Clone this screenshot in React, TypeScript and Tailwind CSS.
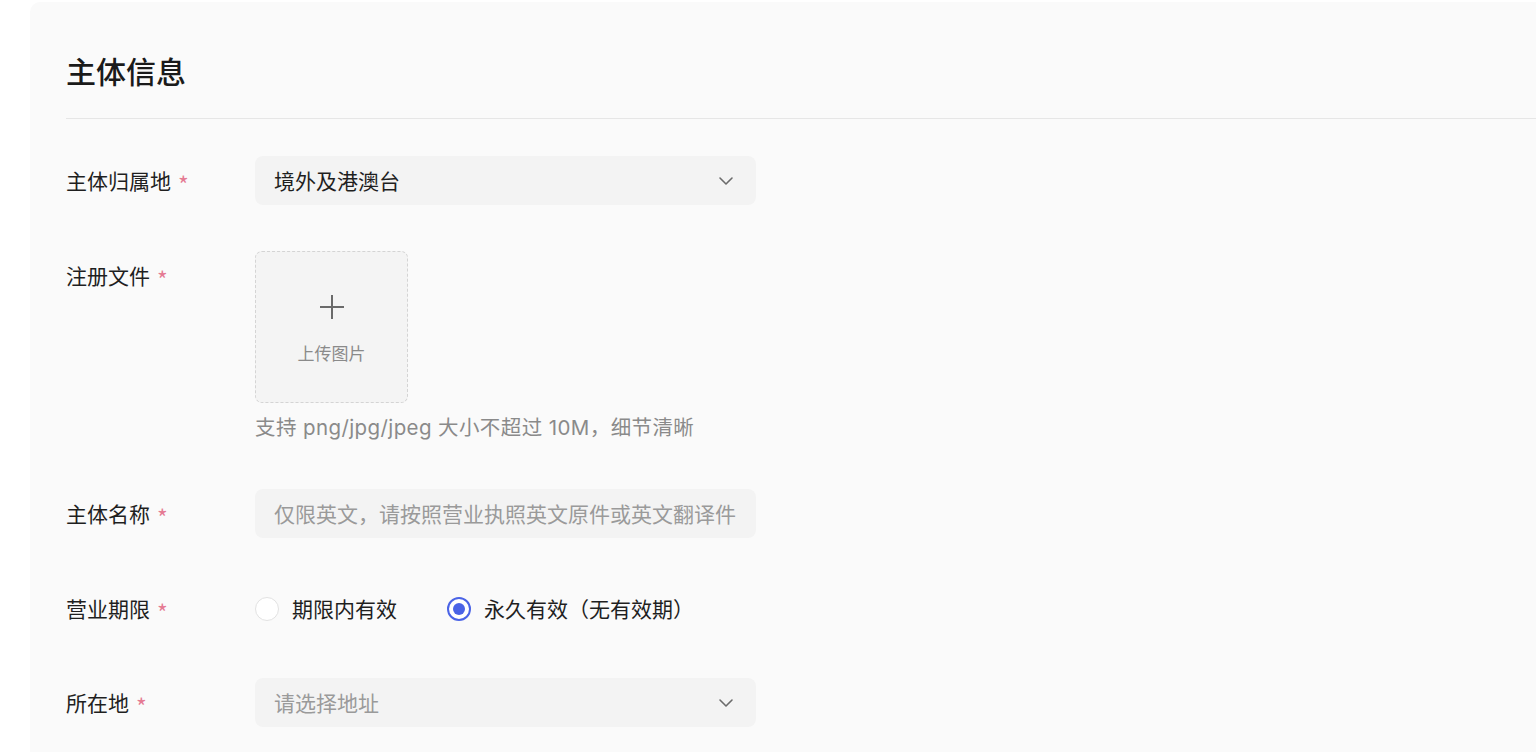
import React from "react";

const FONT = '"Noto Sans CJK SC", "Noto Sans", "Liberation Sans", sans-serif';
const HINT_FONT = 'Inter, "Noto Sans CJK SC", sans-serif';

function Chevron() {
  return (
    <svg width="16" height="10" viewBox="0 0 16 10" fill="none">
      <path d="M2 2l6 6 6-6" stroke="#6b6b6b" strokeWidth="1.6" strokeLinecap="round" strokeLinejoin="round" />
    </svg>
  );
}

function Label({ text }: { text: string }) {
  return (
    <div className="w-[189px] shrink-0 h-[49px] flex items-center text-[21px] text-[#1f1f1f]">
      <span>{text}</span>
      <span className="ml-[7px] text-[#e57a93] text-[23px] leading-none translate-y-[4px]">*</span>
    </div>
  );
}

export default function App() {
  return (
    <div className="min-h-[752px] bg-white overflow-hidden" style={{ fontFamily: FONT }}>
      <div className="ml-[30px] mt-[2px] bg-[#fafafa] rounded-tl-[10px] pl-[36px] min-h-[750px]">
        <div className="pt-[48px] h-[116px]">
          <h1 className="text-[30px] leading-[40px] font-medium text-[#1a1a1a]">主体信息</h1>
        </div>
        <div className="h-px bg-[#e6e6e6]" />

        {/* Row 1 */}
        <div className="flex mt-[37px]">
          <Label text="主体归属地" />
          <div className="w-[501px] h-[49px] rounded-[8px] bg-[#f3f3f3] flex items-center justify-between pl-[19px] pr-[22px] text-[21px] text-[#1f1f1f]">
            <span>境外及港澳台</span>
            <Chevron />
          </div>
        </div>

        {/* Row 2 */}
        <div className="flex mt-[46px]">
          <Label text="注册文件" />
          <div className="flex flex-col">
            <div className="w-[153px] h-[152px] rounded-[7px] bg-[#f4f4f4] border border-dashed border-[#d4d4d4] flex flex-col items-center justify-center">
              <svg width="26" height="26" viewBox="0 0 26 26" className="mt-[4px]">
                <path d="M13 1v24M1 13h24" stroke="#6a6a6a" strokeWidth="2" />
              </svg>
              <span className="mt-[21px] text-[17px] text-[#8a8a8a] leading-[24px]">上传图片</span>
            </div>
            <div className="mt-[11px] text-[20.5px] leading-[28px] tracking-[0.4px] text-[#8a8a8a] whitespace-nowrap" style={{ fontFamily: HINT_FONT }}>
              支持 png/jpg/jpeg 大小不超过 10M，细节清晰
            </div>
          </div>
        </div>

        {/* Row 3 */}
        <div className="flex mt-[47px]">
          <Label text="主体名称" />
          <div className="w-[501px] h-[49px] rounded-[8px] bg-[#f3f3f3] flex items-center pl-[19px] text-[21px] text-[#9a9a9a] whitespace-nowrap overflow-hidden">
            仅限英文，请按照营业执照英文原件或英文翻译件
          </div>
        </div>

        {/* Row 4 */}
        <div className="flex mt-[46px]">
          <Label text="营业期限" />
          <div className="h-[49px] flex items-center text-[21px] text-[#1f1f1f]">
            <span className="w-[24px] h-[24px] rounded-full bg-white border border-[#e2e2e2]" />
            <span className="ml-[13px]">期限内有效</span>
            <span className="ml-[50px] w-[24px] h-[24px] rounded-full border-2 border-[#4a63e6] bg-white flex items-center justify-center">
              <span className="w-[12px] h-[12px] rounded-full bg-[#4a63e6]" />
            </span>
            <span className="ml-[13px]">永久有效（无有效期）</span>
          </div>
        </div>

        {/* Row 5 */}
        <div className="flex mt-[45px]">
          <Label text="所在地" />
          <div className="w-[501px] h-[49px] rounded-[8px] bg-[#f3f3f3] flex items-center justify-between pl-[19px] pr-[22px] text-[21px] text-[#9a9a9a]">
            <span>请选择地址</span>
            <Chevron />
          </div>
        </div>
      </div>
    </div>
  );
}
